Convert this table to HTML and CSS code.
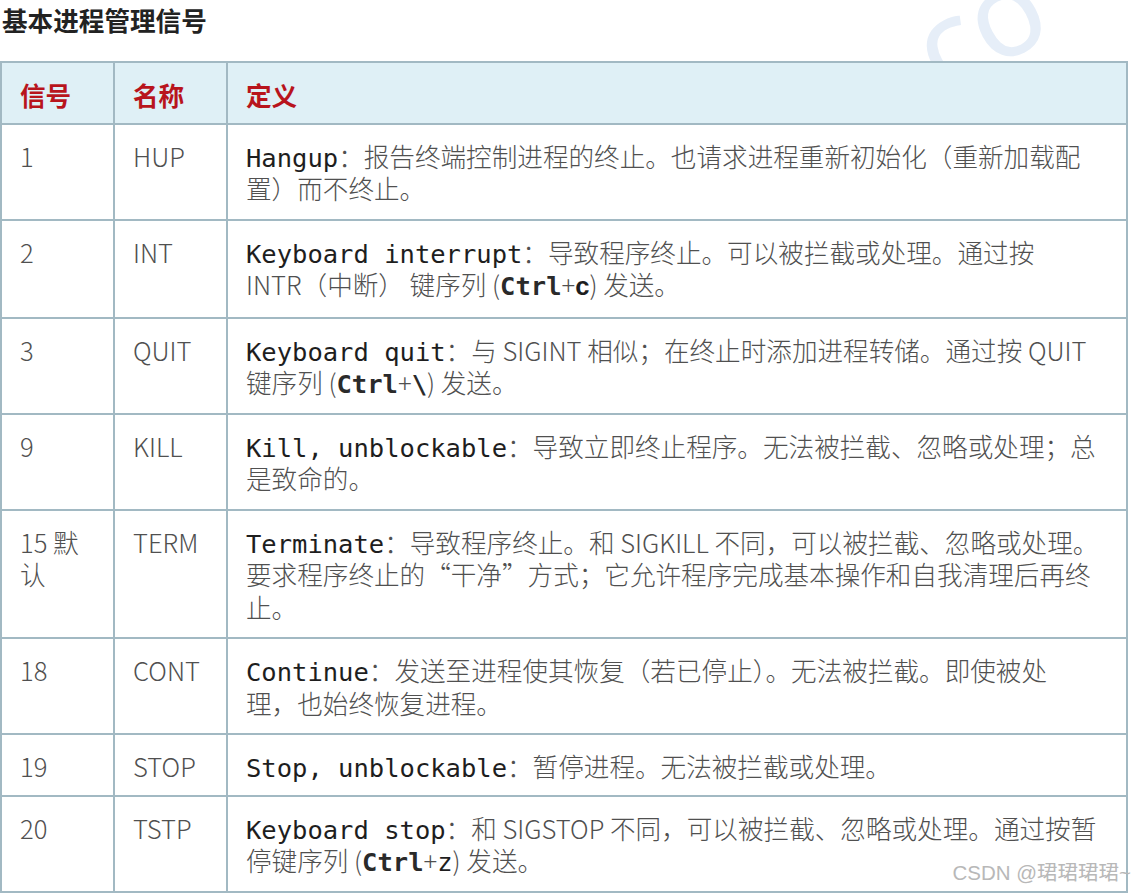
FILE: index.html
```html
<!DOCTYPE html>
<html lang="zh-CN">
<head>
<meta charset="utf-8">
<title>基本进程管理信号</title>
<link rel="stylesheet" href="styles.css">
</head>
<body>
<div class="page">
  <div class="watermark">co</div>
  <h1 class="title">基本进程管理信号</h1>
  <table class="sig-table">
    <colgroup>
      <col class="c-num">
      <col class="c-name">
      <col class="c-def">
    </colgroup>
    <thead>
      <tr><th>信号</th><th>名称</th><th>定义</th></tr>
    </thead>
    <tbody>
      <tr>
        <td>1</td><td>HUP</td>
        <td><span class="mono">Hangup</span>：报告终端控制进程的终止。也请求进程重新初始化（重新加载配<br>置）而不终止。</td>
      </tr>
      <tr class="tall">
        <td>2</td><td>INT</td>
        <td><span class="mono">Keyboard interrupt</span>：导致程序终止。可以被拦截或处理。通过按<br>INTR（中断） 键序列 (<span class="mono b">Ctrl</span>+<span class="key">c</span>) 发送。</td>
      </tr>
      <tr>
        <td>3</td><td>QUIT</td>
        <td><span class="mono">Keyboard quit</span>：与 SIGINT 相似；在终止时添加进程转储。通过按 QUIT<br>键序列 (<span class="mono b">Ctrl</span>+<span class="mono b">\</span>) 发送。</td>
      </tr>
      <tr>
        <td>9</td><td>KILL</td>
        <td><span class="mono">Kill, unblockable</span>：导致立即终止程序。无法被拦截、忽略或处理；总<br>是致命的。</td>
      </tr>
      <tr>
        <td>15 默<br>认</td><td>TERM</td>
        <td><span class="mono">Terminate</span>：导致程序终止。和 SIGKILL 不同，可以被拦截、忽略或处理。<br>要求程序终止的“干净”方式；它允许程序完成基本操作和自我清理后再终<br>止。</td>
      </tr>
      <tr>
        <td>18</td><td>CONT</td>
        <td><span class="mono">Continue</span>：发送至进程使其恢复（若已停止）。无法被拦截。即使被处<br>理，也始终恢复进程。</td>
      </tr>
      <tr class="short">
        <td>19</td><td>STOP</td>
        <td><span class="mono">Stop, unblockable</span>：暂停进程。无法被拦截或处理。</td>
      </tr>
      <tr>
        <td>20</td><td>TSTP</td>
        <td><span class="mono">Keyboard stop</span>：和 SIGSTOP 不同，可以被拦截、忽略或处理。通过按暂<br>停键序列 (<span class="mono b">Ctrl</span>+<span class="mono">z</span>) 发送。</td>
      </tr>
    </tbody>
  </table>
  <div class="credit">CSDN @珺珺珺珺~</div>
</div>
</body>
</html>
```

FILE: styles.css
```css
html, body {
  margin: 0;
  padding: 0;
  background: #ffffff;
}

body {
  font-family: "Noto Sans CJK SC Light", "Noto Sans CJK SC DemiLight", "Noto Sans CJK SC", "Noto Sans", sans-serif;
  color: #505050;
}

.page {
  position: relative;
  width: 1131px;
  height: 893px;
  overflow: hidden;
}

.watermark {
  position: absolute;
  left: 948px;
  top: -12px;
  font-family: "Noto Sans", sans-serif;
  font-size: 120px;
  font-weight: 400;
  color: #e6eef8;
  transform: rotate(-28deg);
  transform-origin: left bottom;
  z-index: 0;
  line-height: 1;
}

.title {
  position: relative;
  z-index: 1;
  margin: 0;
  padding: 5px 0 0 2px;
  height: 54px;
  box-sizing: border-box;
  font-family: "Noto Sans CJK SC", sans-serif;
  font-size: 25.6px;
  line-height: 30px;
  font-weight: 700;
  color: #222222;
}

.sig-table {
  position: relative;
  z-index: 1;
  width: 1128px;
  border-collapse: collapse;
  table-layout: fixed;
  margin-top: 7px;
  font-size: 25.6px;
  line-height: 32.5px;
  font-weight: 300;
}

.c-num { width: 113px; }
.c-name { width: 113px; }

.sig-table th,
.sig-table td {
  border: 2px solid #a2b9c3;
  text-align: left;
  vertical-align: top;
  padding: 15px 4px 14px 18px;
}

.sig-table thead th {
  background: #dff0f6;
  color: #b8141c;
  font-family: "Noto Sans CJK SC", sans-serif;
  font-weight: 700;
  padding-top: 16px;
  padding-bottom: 11px;
}

.sig-table tr.tall td {
  padding-bottom: 16px;
}

.sig-table tr.short td {
  padding-bottom: 12px;
}

.mono {
  font-family: "DejaVu Sans Mono", "Liberation Mono", monospace;
  font-weight: 400;
  font-size: 25.5px;
  line-height: 1;
  color: #1e1e1e;
}

.mono.b {
  font-weight: 700;
  color: #2a2a2a;
}

.key {
  font-family: "Liberation Sans", Arial, sans-serif;
  font-weight: 700;
  line-height: 1;
  color: #1e1e1e;
}

.credit {
  position: absolute;
  right: 0;
  top: 861px;
  font-family: "Liberation Sans", "Noto Sans CJK SC", sans-serif;
  font-size: 20.5px;
  line-height: 24px;
  color: #b8b8b8;
  z-index: 2;
  white-space: nowrap;
}
```
